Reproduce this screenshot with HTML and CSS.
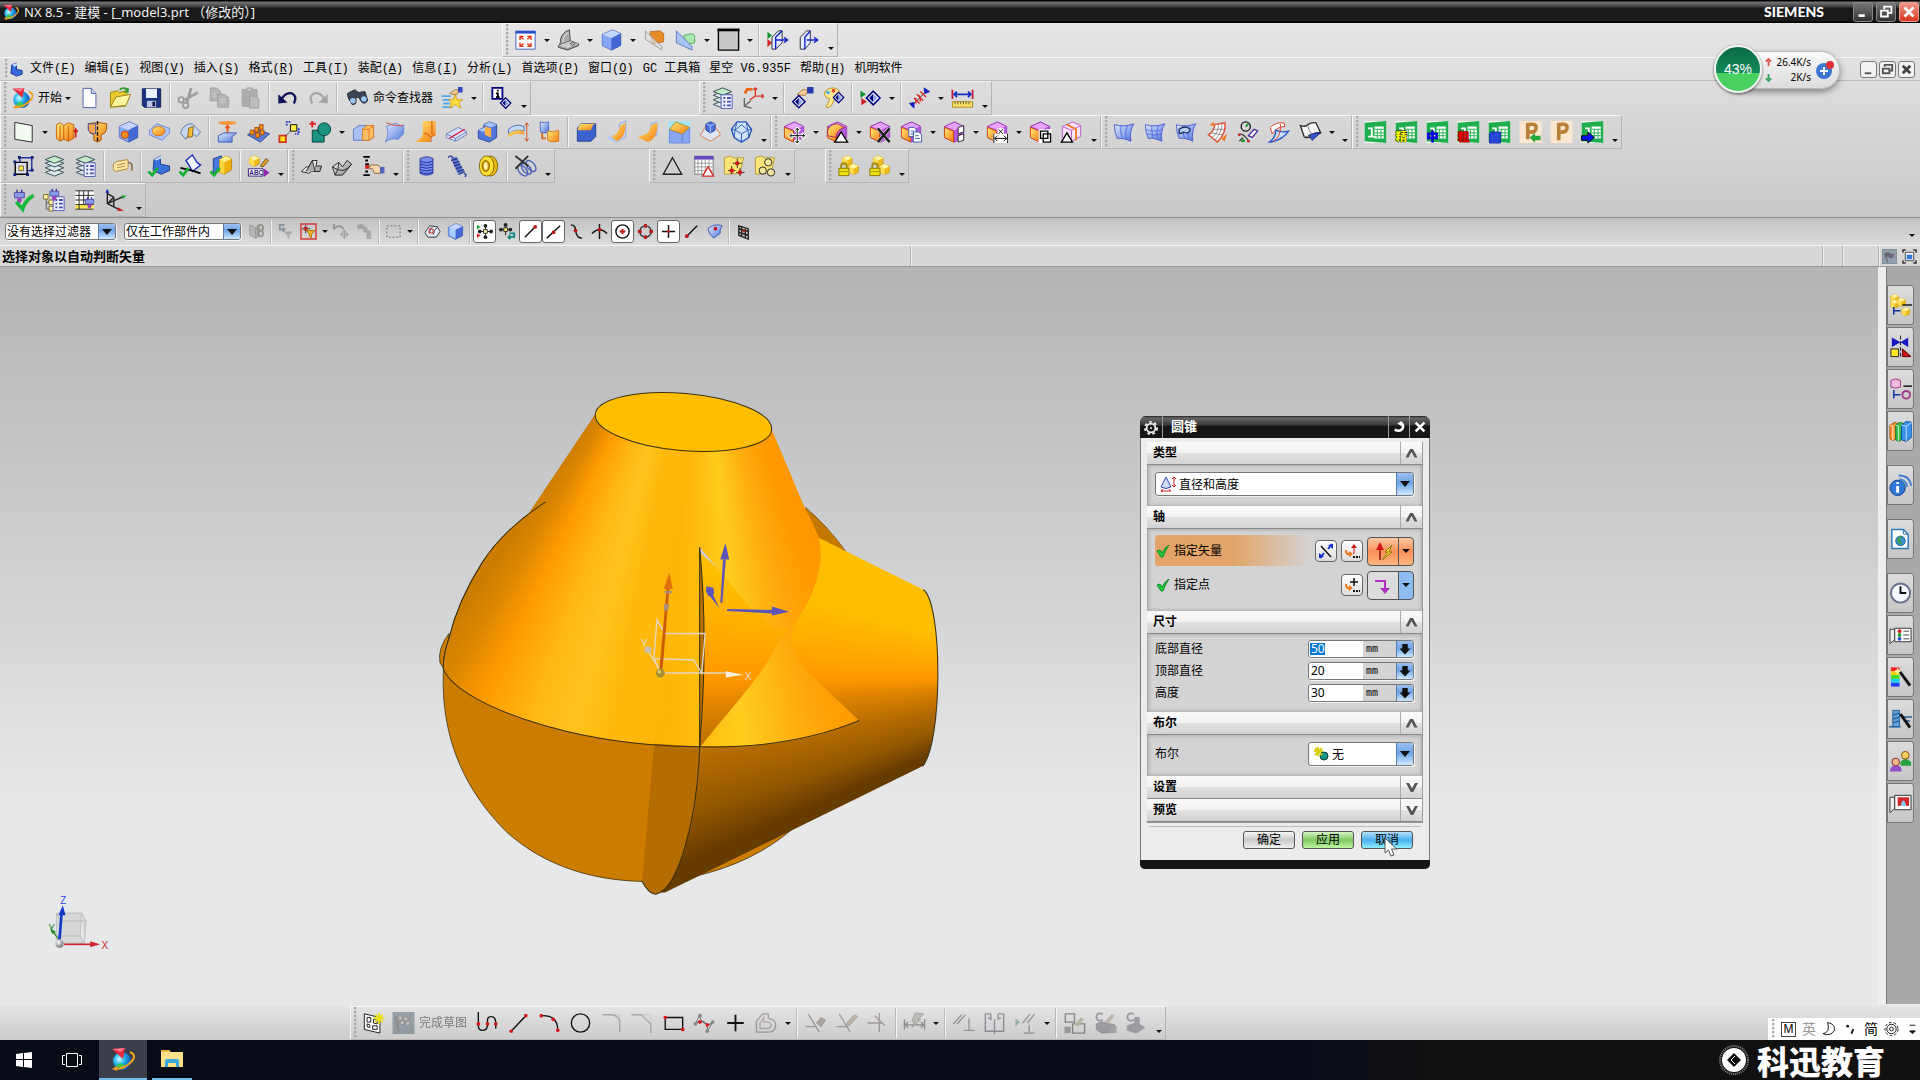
FILE: index.html
```html
<!DOCTYPE html>
<html lang="zh-CN">
	<head>
		<meta charset="UTF-8">
		<meta name="viewport" content="width=device-width,initial-scale=1" />
		<title>NX 8.5 - 建模</title>
		<link rel="stylesheet" href="styles.css">
	</head>
	<body>
		<!-- shared shapes -->
		<svg class="defs" aria-hidden="true">
			<defs>
				<linearGradient id="gB" x1="0" y1="0" x2="1" y2="1"><stop offset="0" stop-color="#e4eeff"/><stop offset="1" stop-color="#4a72dc"/></linearGradient>
				<linearGradient id="gO" x1="0" y1="0" x2="1" y2="1"><stop offset="0" stop-color="#fff07a"/><stop offset="1" stop-color="#f77a10"/></linearGradient>
				<linearGradient id="gG" x1="0" y1="0" x2="1" y2="1"><stop offset="0" stop-color="#fff"/><stop offset="1" stop-color="#777"/></linearGradient>
				<radialGradient id="gGlobe" cx=".35" cy=".4" r=".7"><stop offset="0" stop-color="#d8ffff"/><stop offset=".4" stop-color="#28b8f0"/><stop offset="1" stop-color="#0a4ab0"/></radialGradient>
				<radialGradient id="gBall" cx=".35" cy=".3" r=".8"><stop offset="0" stop-color="#fff"/><stop offset="1" stop-color="#666"/></radialGradient>
				<symbol id="cubeB" viewBox="0 0 24 24"><path d="M2 6L13 1L22 5V18L12 23L2 18Z" fill="#5078e0" stroke="#2a44a0"/><path d="M2 6L12 10V23L2 18Z" fill="#86a8f4"/><path d="M2 6L13 1L22 5L12 10Z" fill="#c4d6ff"/><path d="M12 10L22 5V18L12 23Z" fill="#4468d4"/></symbol>
				<symbol id="cubeP" viewBox="0 0 24 24"><path d="M1 6L12 1L22 6V18L12 23L1 18Z" fill="#b040d8" stroke="#8a2ab0"/><path d="M1 7L11 11V23L1 18Z" fill="url(#gO)" stroke="#d04a08"/><path d="M2 6L12 1.500L21 6L12 10Z" fill="#e8a4fa"/><path d="M12 11L22 6V18L12 23Z" fill="#b558da"/></symbol>
				<symbol id="cubeY" viewBox="0 0 24 24"><path d="M2 6L12 1L22 6V18L12 23L2 18Z" fill="#f0b818" stroke="#c08808"/><path d="M2 6L12 1L22 6L12 11Z" fill="#fff6a8"/><path d="M2 6L12 11V23L2 18Z" fill="#ffdc50"/></symbol>
				<symbol id="nx" viewBox="0 0 24 24"><circle cx="11" cy="14" r="9" fill="url(#gGlobe)"/><path d="M5 19Q9 13 15 20Q11 25 5 19Z" fill="#3cc84a"/><path d="M19 5Q26 8 21 14Q14 22 4 22" fill="none" stroke="#f0a020" stroke-width="2"/><path d="M1 22L6 19L6 24Z" fill="#f0a020"/><path d="M1 2L14 1L12 12Z" fill="#e8283c"/><path d="M1 2L14 1L10 5Z" fill="#ff7888"/></symbol>
				<symbol id="page" viewBox="0 0 24 24"><path d="M5 1.500H14L19 7V22.500H5Z" fill="#fff" stroke="#4a5ca8"/><path d="M14 1.500V7H19" fill="#ccd8f8" stroke="#4a5ca8"/></symbol>
				<symbol id="layers" viewBox="0 0 24 24"><g fill="#dce8e8" stroke="#2c4650"><path d="M2 19L12 15L22 19L12 23Z"/><path d="M2 14L12 10L22 14L12 18Z"/><path d="M2 9L12 5L22 9L12 13Z"/><path d="M2 5L12 1L22 5L12 9Z" fill="#c4ecc8"/></g></symbol>
				<symbol id="list" viewBox="0 0 24 24"><path d="M10.500 8.500H22.500V23.500H10.500Z" fill="#eef0ff" stroke="#5058b8"/><path d="M13 12h2M17 12h4M13 16h2M17 16h4M13 20h2M17 20h4" stroke="#4048a8" stroke-width="2"/></symbol>
				<symbol id="sheet" viewBox="0 0 24 24"><path d="M1 4Q12 7 22 3Q17 12 19 22Q10 18 4 19Q1 12 1 4Z" fill="url(#gB)" stroke="#4a5ad0"/><path d="M8 5Q7 12 10 19M15 5Q12 12 14 20" stroke="#5a6ae0" fill="none"/></symbol>
				<symbol id="eyeCard" viewBox="0 0 24 24"><path d="M12 4L20 12L12 20L4 12Z" fill="#fff" stroke="#000080" stroke-width="2"/><path d="M12 7V17L7 12Z" fill="#000080"/><path d="M12 7V17L17 12Z" fill="#88a8e8"/></symbol>
				<symbol id="xls" viewBox="0 0 24 24"><path d="M0 0H24V24H0Z" fill="#f4faf4"/><path d="M0 2L24 0V24L0 22Z" fill="#1fae4e"/><path d="M4 8H8V17M4 17H11" fill="none" stroke="#fff" stroke-width="2"/><path d="M11 6H21V19H11Z" fill="#fff"/><path d="M11 9H21M11 13H21M11 16H21M14 9V19M18 9V19" stroke="#1fae4e"/></symbol>
				<symbol id="usb" viewBox="0 0 24 24"><path d="M6 1V6M12 1V6" stroke="#38389c" stroke-width="2"/><path d="M2.500 4.500H15.500V11.500H2.500Z" fill="#8898e8" stroke="#38389c"/><path d="M6 12H12V16L9 19L6 16Z" fill="#a040c0"/></symbol>
				<symbol id="tick" viewBox="0 0 14 14"><path d="M1 7L4 6L6 9Q9 3 13 1Q9 7 7 13H5Z" fill="#22c83c" stroke="#12902a"/></symbol>
				<symbol id="lock" viewBox="0 0 24 24"><use href="#cubeY" x="4" y="0" width="13" height="13"/><use href="#cubeY" x="11" y="9" width="13" height="13"/><path d="M4 15V12Q4 9 7 9Q10 9 10 12V15" fill="none" stroke="#a08c10" stroke-width="2"/><path d="M1.500 14.500H12.500V22.500H1.500Z" fill="#f0e010" stroke="#807008"/><path d="M2 18H12" stroke="#a89c10"/></symbol>
			</defs>
		</svg>

		<header class="titlebar">
			<svg class="logo" viewBox="0 0 24 24"><use href="#nx"/></svg>
			<h1>NX 8.5 - 建模 - [_model3.prt （修改的）]</h1>
			<b class="brand">SIEMENS</b>
			<button title="最小化"><svg viewBox="0 0 20 20"><path d="M5 14H12" stroke="#fff" stroke-width="3"/></svg></button>
			<button title="还原"><svg viewBox="0 0 20 20"><path d="M8 7V4H16V11H13M4.500 8.500H12V15H4.500Z" stroke="#fff" stroke-width="2" fill="none"/></svg></button>
			<button class="red" title="关闭"><svg viewBox="0 0 20 20"><path d="M5 5L15 15M15 5L5 15" stroke="#fff" stroke-width="3"/></svg></button>
		</header>

		<div class="ribbon">
			<div class="row">
				<div class="bar in-502">
					<button title="适合窗口"><svg viewBox="0 0 24 24"><path d="M1.500 2.500H22.500V22H1.500Z" fill="#fff" stroke="#3a5cc0"/><path d="M1 2H23V5H1Z" fill="#2a50c8"/><path d="M6 12V8H10M14 8H18V12M6 15V19H10M18 15V19H14M7 9L10 11M17 9L14 11M7 18L10 16M17 18L14 16" stroke="#e03010" stroke-width="1.500"/></svg></button><button class="caret" title="适合选项"></button>
					<button title="剖切"><svg viewBox="0 0 24 24"><path d="M3 15Q3 4 13 1L14 13L2 18Z" fill="#aaa" stroke="#444"/><path d="M6 14Q6 7 12 4" stroke="#eee"/><path d="M1 18L14 13L23 16V18L11 23L1 20Z" fill="#999" stroke="#444"/><path d="M1 18L14 13L23 16L11 21Z" fill="#ccc"/><path d="M14 16l3-2 2 2-3 2Z" stroke="#444"/></svg></button><button class="caret" title="剖切选项"></button>
					<button title="着色"><svg viewBox="0 0 24 24"><use href="#cubeB"/></svg></button><button class="caret" title="着色选项"></button>
					<button title="编辑截面"><svg viewBox="0 0 24 24"><path d="M7 3L18 2L22 5V14L10 16Z" fill="#e88a28" stroke="#c07020"/><path d="M2 2L20 19V23L2 11Z" fill="#ddd" fill-opacity=".7" stroke="#999"/></svg></button>
					<button title="剪切截面"><svg viewBox="0 0 24 24"><path d="M10 7L19 5L22 7V15L13 17Z" fill="#a8e8b0" stroke="#50a860"/><path d="M2 2L19 19V23L2 15Z" fill="#a8c4f4" stroke="#5a78b8"/></svg></button><button class="caret" title="截面选项"></button>
					<button title="背景"><svg viewBox="0 0 24 24"><path d="M1 1H23V23H1Z" fill="#c9c9c9" stroke="#000" stroke-width="1.500"/><path d="M0 1H24" stroke="#000" stroke-width="3"/></svg></button><button class="caret" title="背景选项"></button>
					<i class="sep"></i>
					<button title="显示和隐藏"><svg viewBox="0 0 24 24"><path d="M1 3L6 7L1 11Z" fill="#10902a"/><path d="M1 11L6 15L1 20Z" fill="#d02020"/><path d="M6 22V9L13 2H17V15L10 22Z" fill="#e4ecff" stroke="#223"/><path d="M10 22V9L17 2M10 12H23M19 9L23 12L19 15" stroke="#1020d0" stroke-width="1.500"/></svg></button>
					<button title="隐藏"><svg viewBox="0 0 24 24"><path d="M3 22V9L10 2H14V15L8 22Z" fill="#e4ecff" stroke="#223"/><path d="M8 22V9L14 2M10 12H22M18 9L22 12L18 15" stroke="#1020d0" stroke-width="1.500"/></svg></button>
					<button class="more" title="更多"></button>
				</div>
			</div>

			<nav class="menu">
				<i class="grip"></i>
				<svg viewBox="0 0 16 16"><path d="M3 3L8 1V8L14 9V13L8 15L2 12Z" fill="#3a6ad8" stroke="#12308c"/><path d="M3 3L8 1L10 3L6 5Z" fill="#c4d8ff"/></svg>
				<a href="#">文件(<u>F</u>)</a><a href="#">编辑(<u>E</u>)</a><a href="#">视图(<u>V</u>)</a><a href="#">插入(<u>S</u>)</a><a href="#">格式(<u>R</u>)</a><a href="#">工具(<u>T</u>)</a><a href="#">装配(<u>A</u>)</a><a href="#">信息(<u>I</u>)</a><a href="#">分析(<u>L</u>)</a><a href="#">首选项(<u>P</u>)</a><a href="#">窗口(<u>O</u>)</a><a href="#">GC 工具箱</a><a href="#">星空 V6.935F</a><a href="#">帮助(<u>H</u>)</a><a href="#">机明软件</a>
				<div class="mdi">
					<button title="最小化"><svg viewBox="0 0 16 16"><path d="M4 12H11" stroke="#555" stroke-width="2"/></svg></button>
					<button title="还原"><svg viewBox="0 0 16 16"><path d="M5 5V3H13V9H11M3 7H10V12H3Z" stroke="#555" stroke-width="2" fill="none"/></svg></button>
					<button title="关闭"><svg viewBox="0 0 16 16"><path d="M4 4L12 12M12 4L4 12" stroke="#444" stroke-width="3"/></svg></button>
				</div>
			</nav>

			<div class="row">
				<div class="bar">
					<button class="wide"><svg viewBox="0 0 24 24"><use href="#nx"/></svg>开始</button><button class="caret" title="开始选项"></button>
					<button title="新建"><svg viewBox="0 0 24 24"><use href="#page"/></svg></button>
					<button title="打开"><svg viewBox="0 0 24 24"><path d="M1 22V6L9 4L11 6L19 4V9L22 10L17 21Z" fill="#e8c830" stroke="#98800c"/><path d="M1 22L7 11L23 8L18 20Z" fill="#fff6a0" stroke="#98800c"/><path d="M11 3Q16 -1 20 4M20 1V5H16" stroke="#2a9a30" stroke-width="2"/></svg></button>
					<button title="保存"><svg viewBox="0 0 24 24"><path d="M2 2H22V22H4L2 20Z" fill="#1c3480" stroke="#0c1c50"/><path d="M6 2H18V12H6Z" fill="#e8f0fc"/><path d="M7 15H17V22H7Z" fill="#b8c4e0"/><path d="M13 16H16V21H13Z" fill="#101840"/></svg></button>
					<i class="sep"></i>
					<button class="off" title="剪切"><svg viewBox="0 0 24 24"><path d="M15 1L10 18M22 6L8 14" stroke="#555" stroke-width="3"/><circle cx="4" cy="14" r="3" stroke="#555" stroke-width="2"/><circle cx="9" cy="20" r="3" stroke="#555" stroke-width="2"/></svg></button>
					<button class="off" title="复制"><svg viewBox="0 0 24 24"><g fill="#888" stroke="#555"><path d="M2 1H9L13 5V15H2Z"/><path d="M10 8H18L22 12V22H10Z"/></g><path d="M4 7H9M4 10H9M12 14H19M12 17H19" stroke="#ccc"/></svg></button>
					<button class="off" title="粘贴"><svg viewBox="0 0 24 24"><path d="M3 3H19V21H3Z" fill="#777" stroke="#555"/><path d="M8 1H14V5H8Z" fill="#aaa" stroke="#555"/><path d="M11 10H18L21 13V23H11Z" fill="#999" stroke="#555"/></svg></button>
					<i class="sep"></i>
					<button title="撤销"><svg viewBox="0 0 24 24"><path d="M5 14Q10 5 17 7Q23 10 19 18" stroke="#101058" stroke-width="2.500"/><path d="M2 8V18L12 17Z" fill="#101058"/></svg></button>
					<button class="off" title="重做"><svg viewBox="0 0 24 24"><path d="M19 14Q14 5 7 7Q1 10 5 18" stroke="#666" stroke-width="2.500"/><path d="M22 8V18L12 17Z" fill="#666"/></svg></button>
					<i class="sep"></i>
					<button class="wide pad"><svg viewBox="0 0 24 24"><path d="M1 7L9 3L13 6L20 5L23 14Q22 19 17 17L13 11L10 12Q12 20 6 19L2 12Z" fill="#3a4658" stroke="#1c2430"/><circle cx="7" cy="15" r="3" fill="#9cc8f4"/><circle cx="19" cy="13" r="3" fill="#9cc8f4"/></svg>命令查找器</button>
					<button title="收藏"><svg viewBox="0 0 24 24"><path d="M0 10H10M1 14H10M2 18H9M1 22H12" stroke="#50a8e8" stroke-width="2"/><path d="M15 8L17 14H23L19 17L21 23L15 19L9 23L11 17L8 14H13Z" fill="#ffe040" stroke="#d8a010"/><path d="M9 7L15 3H19L17 8H12Z" fill="#f8cc98" stroke="#a87840"/><path d="M18 0H23V6H18Z" fill="#3848c0"/></svg></button><button class="caret" title="收藏选项"></button>
					<i class="sep"></i>
					<button title="对象信息"><svg viewBox="0 0 24 24"><path d="M2 1H13V13H2Z" fill="#fff" stroke="#000080" stroke-width="2"/><path d="M8 3V5M6 7H8V11M6 11H10" stroke="#000" stroke-width="2"/><use href="#eyeCard" x="8" y="9" width="17" height="17"/></svg></button>
					<button class="more" title="更多"></button>
				</div>
				<div class="bar in-168">
					<button title="图层设置"><svg viewBox="0 0 24 24"><use href="#layers"/><use href="#list"/></svg></button>
					<button title="坐标系"><svg viewBox="0 0 24 24"><path d="M14 1V10L8 14M14 10H23M12 3L14 1L16 3M21 8L23 10L21 12" stroke="#e03828" stroke-width="1.500"/><path d="M2 12V21L10 23M2 21L9 15" stroke="#666" stroke-width="1.500"/><path d="M1 6L4 2L3 1H11V4L6 4L4 8Z" fill="#f06818"/></svg></button><button class="caret" title="坐标系选项"></button>
					<i class="sep"></i>
					<button title="编辑显示"><svg viewBox="0 0 24 24"><path d="M6 8L12 3H19L15 9H9Z" fill="#f8cc98" stroke="#a87840"/><path d="M17 0H24V7H17Z" fill="#2a38b0"/><use href="#eyeCard" x="-2" y="6" width="20" height="20"/></svg></button>
					<button title="涂色"><svg viewBox="0 0 24 24"><path d="M2 8Q3 1 12 1Q20 2 19 9Q14 11 13 13L10 20Q6 24 4 22L8 13Q3 12 2 8Z" fill="#ffe890" stroke="#b88c20"/><circle cx="6" cy="6" r="2" fill="#3cb0e8"/><circle cx="12" cy="4" r="2" fill="#e84830"/><use href="#eyeCard" x="9" y="3" width="17" height="17"/></svg></button>
					<i class="sep"></i>
					<button title="显示"><svg viewBox="0 0 24 24"><path d="M1 4L7 8L1 12Z" fill="#10902a"/><path d="M2 12L8 16L2 20Z" fill="#d02020"/><use href="#eyeCard" x="4" y="1" width="22" height="22"/></svg></button><button class="caret" title="显示选项"></button>
					<i class="sep"></i>
					<button title="测量距离"><svg viewBox="0 0 24 24"><path d="M4 20L20 4" stroke="#222"/><path d="M6 12L12 18M9 8L16 15M13 5L19 11M8 12V18M12 9L13 16" stroke="#d82828" stroke-width="1.500"/><path d="M1 18L6 17V23ZM17 1L18 7L23 5Z" fill="#1020c0" stroke="#1020c0"/></svg></button><button class="caret" title="测量选项"></button>
					<button title="标尺"><svg viewBox="0 0 24 24"><path d="M1 3V13M23 3V13" stroke="#c02040" stroke-width="2"/><path d="M3 8H21M6 5L3 8L6 11M18 5L21 8L18 11" stroke="#1030c0" stroke-width="2"/><path d="M1 16H23V22H1Z" fill="#ffe468" stroke="#a88418"/><path d="M4 16v3M7 16v3M10 16v3M13 16v3M16 16v3M19 16v3" stroke="#554"/></svg></button>
					<button class="more" title="更多"></button>
				</div>
			</div>

			<div class="row">
				<div class="bar">
					<button title="基准平面"><svg viewBox="0 0 24 24"><path d="M2.500 1.500L21.500 5V23L2.500 20Z" fill="#f2faf2" stroke="#222"/></svg></button><button class="caret" title="基准选项"></button>
					<button title="拉伸"><svg viewBox="0 0 24 24"><path d="M1 4L5 2L9 5L14 2L20 4V19L14 22L9 20L5 22L1 19Z" fill="url(#gO)" stroke="#c86010"/><path d="M5 5V22M9 5V20M14 5V22" stroke="#c05808"/><path d="M22 18V9M20 12L22 9L24 12" stroke="#d02818" stroke-width="2"/></svg></button>
					<button title="回转"><svg viewBox="0 0 24 24"><path d="M2 3Q12 0 22 3V9Q21 14 16 15V21L12 23L8 21V15Q3 14 2 9Z" fill="url(#gO)" stroke="#a84808"/><path d="M2 3H10V14Q3 14 2 9Z" fill="#f8a850" stroke="#3a50a8"/><path d="M12 0V24" stroke="#000" stroke-width="1.500" stroke-dasharray="4 2"/></svg></button>
					<button title="孔"><svg viewBox="0 0 24 24"><use href="#cubeB"/><circle cx="8" cy="15" r="4" fill="#f89020" stroke="#c03808"/></svg></button>
					<button title="凸台"><svg viewBox="0 0 24 24"><path d="M1 10L9 3L23 8V13L15 21L1 15Z" fill="#a8c4f8" stroke="#7088d0"/><ellipse cx="11" cy="11" rx="7" ry="5" fill="url(#gO)" stroke="#d87018"/></svg></button>
					<button title="扫掠"><svg viewBox="0 0 24 24"><path d="M1 13Q5 2 14 3L23 12L19 17Q10 10 7 20Z" fill="#c4d6f0" stroke="#5a789c"/><path d="M10 8L15 6L14 17L9 18Z" fill="#f8c038" stroke="#8c6010"/></svg></button>
					<i class="sep"></i>
					<button title="垫块"><svg viewBox="0 0 24 24"><ellipse cx="12" cy="2" rx="10" ry="2" fill="#f89838"/><path d="M12 5V13M10 8L12 5L14 8" stroke="#e85818" stroke-width="2"/><path d="M2 16L8 13H22L17 17V23H2Z" fill="url(#gB)" stroke="#3a58c0"/></svg></button>
					<button title="阵列"><svg viewBox="0 0 24 24"><path d="M0 15L10 9L24 14L14 23Z" fill="#5a7cdc" stroke="#2a489c"/><g fill="#f89020" stroke="#a04c08"><path d="M3 10h4v5h-4zM8 7h4v5h-4zM13 4h4v5h-4zM9 13h4v5h-4zM14 10h4v5h-4z"/></g></svg></button>
					<button title="复制面"><svg viewBox="0 0 24 24"><path d="M1 16H8V23H1Z" fill="#ffe828" stroke="#d03818" stroke-width="2"/><path d="M13 4H20V11H13Z" fill="#fff04c" stroke="#000"/><path d="M8 16L13 11" stroke="#000" stroke-dasharray="2 1"/><path d="M9 5V1H14M22 8V14H18" stroke="#2838c0" stroke-width="2" stroke-dasharray="2 1"/></svg></button>
					<button title="求和"><svg viewBox="0 0 24 24"><path d="M3 0V7M0 3H7" stroke="#e02020" stroke-width="2"/><path d="M3 10H16V23H3Z" fill="#1c9484" stroke="#043c38"/><circle cx="16" cy="9" r="7" fill="#1c9484" stroke="#043c38"/></svg></button><button class="caret" title="布尔选项"></button>
					<button title="抽壳"><svg viewBox="0 0 24 24"><path d="M1 9L7 5H23V18L18 21H1Z" fill="#a8c0f4" stroke="#6078c8"/><path d="M11 9L15 5H23V18L18 21H11Z" fill="#fbbf68" stroke="#e07818"/><path d="M11 9H18V21M18 9L23 5" stroke="#e07818"/></svg></button>
					<button title="修剪体"><svg viewBox="0 0 24 24"><path d="M2 23Q7 13 3 6L14 2Q20 8 22 4L22 14Q18 18 16 20Q8 18 2 23Z" fill="url(#gB)" stroke="#6a88d8"/><path d="M3 2Q12 6 21 5" stroke="#e04830"/></svg></button>
					<button title="延伸"><svg viewBox="0 0 24 24"><path d="M9 0H23V16L17 18V23H0Q9 20 9 12Z" fill="url(#gO)"/><path d="M10 13Q16 14 18 18L22 14M18 18V23M19 0V14" stroke="#c84808"/></svg></button>
					<button title="分割"><svg viewBox="0 0 24 24"><path d="M1 14L14 7L23 12V15L11 22L1 18Z" fill="#d4e0fa" stroke="#6878b8"/><path d="M1 14L11 19L23 12M11 19V22" stroke="#6878b8"/><path d="M4 19L21 9" stroke="#e02040" stroke-width="1.500"/></svg></button>
					<button title="凸起"><svg viewBox="0 0 24 24"><path d="M2 10L8 7V4L14 1L22 4V18L14 23L2 19Z" fill="#5078dc" stroke="#2c489c"/><path d="M2 10L8 7L13 9L8 12ZM8 4L14 1L22 4L16 7Z" fill="#a8c4ff"/><path d="M9 6L16 8V18L9 15Z" fill="#fbb048"/></svg></button>
					<button title="偏置曲面"><svg viewBox="0 0 24 24"><path d="M1 9Q9 2 18 6V11Q9 8 1 14Z" fill="#c4dcfa" stroke="#4868b0"/><path d="M1 14Q9 8 18 11V15Q9 12 1 18Z" fill="url(#gO)"/><path d="M21 2V22M19 5L21 2L23 5M19 19L21 22L23 19" stroke="#d84818"/></svg></button>
					<button title="缝合"><svg viewBox="0 0 24 24"><path d="M2 1Q7 3 11 1V12Q7 14 2 12Z" fill="url(#gB)" stroke="#4a68c8"/><path d="M10 11Q16 13 22 10V22Q15 24 10 21Z" fill="url(#gO)" stroke="#d87818"/><path d="M4 13V19H8" stroke="#e06818" stroke-width="2"/></svg></button>
					<i class="sep"></i>
					<button title="边倒圆"><svg viewBox="0 0 24 24"><path d="M2 8L6 3H22V17L17 22H2Z" fill="#3c62d0" stroke="#203c90"/><path d="M2 10Q3 5 6 3H22Q18 4 17 10Z" fill="url(#gO)"/></svg></button>
					<button title="面倒圆"><svg viewBox="0 0 24 24"><path d="M14 3L21 0V18L14 20Z" fill="#c8d8f6" stroke="#90a8dc"/><path d="M0 18L9 15L19 20L10 24Z" fill="#b0c8f4"/><path d="M5 17Q13 15 15 5L21 2Q21 19 11 22Z" fill="url(#gO)"/></svg></button>
					<button title="软倒圆"><svg viewBox="0 0 24 24"><path d="M14 2L22 0V17H14Z" fill="#a8c0f0"/><path d="M0 18L7 15Q14 13 15 4L22 2Q22 20 11 23Z" fill="url(#gO)"/></svg></button>
					<button title="倒斜角"><svg viewBox="0 0 24 24"><path d="M0 0H24V24H0Z" fill="#a8e4f8"/><path d="M1 9L15 15V24H1ZM15 15L23 7V24H15Z" fill="#88a8f4" stroke="#6888dc"/><path d="M1 9L8 1L23 7L15 14Z" fill="url(#gO)" stroke="#a89020"/></svg></button>
					<button title="拔模"><svg viewBox="0 0 24 24"><path d="M1 16L12 22L23 15L15 3H8Z" fill="#dfe5f2" stroke="#e07848"/><path d="M7 3L12 1L17 3V10L12 13L7 10Z" fill="#4c74d8" stroke="#203c90"/><path d="M7 3L12 5L17 3M12 5V13" stroke="#a8c4ff"/></svg></button>
					<button title="多面体"><svg viewBox="0 0 24 24"><path d="M7 1H17L23 9L20 18L12 23L4 18L1 9Z" fill="#cfe2f8" stroke="#2c58b8" stroke-width="1.500"/><path d="M7 1L5 10L12 14L19 10L17 1M1 9L5 10L4 18M23 9L19 10L20 18M12 14V23M5 10L12 4L19 10" stroke="#2c58b8"/></svg></button>
					<button class="more" title="更多"></button>
				</div>
				<div class="bar">
					<button title="移动面"><svg viewBox="0 0 24 24"><use href="#cubeP"/><path d="M15 8V24M7 16H23M12 11L15 8L18 11M12 21L15 24L18 21M10 13L7 16L10 19M20 13L23 16L20 19" stroke="#fff" stroke-width="3"/><path d="M15 8V24M7 16H23M13 10L15 8L17 10M13 22L15 24L17 22M9 14L7 16L9 18M21 14L23 16L21 18" stroke="#000"/></svg></button><button class="caret" title="移动选项"></button>
					<button title="偏置面"><svg viewBox="0 0 24 24"><use href="#cubeP"/><path d="M1 11Q4 3 12 3L20 7Q12 8 10 18L1 16Z" fill="url(#gO)" stroke="#a02868"/><path d="M16 12L23 23H9Z" fill="#fff" stroke="#000" stroke-width="1.500"/></svg></button><button class="caret" title="偏置选项"></button>
					<button title="删除面"><svg viewBox="0 0 24 24"><use href="#cubeP"/><path d="M9 8L22 23M22 8L9 23" stroke="#fff" stroke-width="4"/><path d="M9 8L22 23M22 8L9 23" stroke="#222" stroke-width="3"/></svg></button>
					<button title="复制面"><svg viewBox="0 0 24 24"><use href="#cubeP"/><g fill="#fff" stroke="#3858b0"><path d="M9 7H15L17 9V17H9Z"/><path d="M14 12H20L23 15V23H14Z"/></g><path d="M11 11h4M11 14h4M16 16h4M16 19h5" stroke="#3858b0"/></svg></button><button class="caret" title="复制选项"></button>
					<button title="替换面"><svg viewBox="0 0 24 24"><use href="#cubeP"/><path d="M16 7L22 5V12L16 14ZM16 16L22 14V21L16 23Z" fill="#fff" stroke="#222"/></svg></button><button class="caret" title="替换选项"></button>
					<button title="线性尺寸"><svg viewBox="0 0 24 24"><use href="#cubeP"/><path d="M7 14H24V24H7ZM12 8H19V14H12Z" fill="#fff"/><path d="M8 14V24M23 14V24M9 19H22M12 16L9 19L12 22M19 16L22 19L19 22M13 9L18 14M18 9L13 14" stroke="#000"/></svg></button><button class="caret" title="尺寸选项"></button>
					<button title="组"><svg viewBox="0 0 24 24"><use href="#cubeP"/><path d="M10 9H24V24H10Z" fill="#fff"/><path d="M12 11H20V19H12ZM15 14H23V23H15Z" stroke="#000" stroke-width="1.500"/></svg></button>
					<button title="横截面"><svg viewBox="0 0 24 24"><path d="M2 6L13 1L22 5V17L12 22L2 18Z" fill="#f8e4f8" stroke="#c050d0"/><path d="M2 6L12 10L22 5M12 10V22" stroke="#c050d0"/><path d="M7 4L17 9V21" stroke="#f07818" stroke-width="2"/><path d="M7 13L13 23H1Z" fill="#fff" stroke="#000" stroke-width="1.500"/></svg></button>
					<button class="more" title="更多"></button>
				</div>
				<div class="bar">
					<button title="直纹"><svg viewBox="0 0 24 24"><use href="#sheet"/></svg></button>
					<button title="通过曲线网格"><svg viewBox="0 0 24 24"><use href="#sheet"/><path d="M1 9Q10 13 20 9M3 14Q10 17 19 14" stroke="#5a6ae0"/></svg></button>
					<button title="剖切曲面"><svg viewBox="0 0 24 24"><use href="#sheet"/><path d="M4 14V9Q11 4 16 9Q15 15 9 12L4 14" fill="#b8d0f0" stroke="#1c2c60" stroke-width="1.500"/></svg></button>
					<button title="艺术曲面"><svg viewBox="0 0 24 24"><path d="M9 4L20 2Q22 12 12 23L2 15Q8 12 9 4Z" fill="#fff" stroke="#e04828" stroke-width="1.500"/><path d="M13 4Q13 13 6 18M17 3Q17 12 9 21M6 9L19 9M5 13L17 15" stroke="#888"/><path d="M3 5L8 1L9 5ZM16 20L22 14L20 22Z" fill="#f07818"/></svg></button>
					<button title="曲面工具"><svg viewBox="0 0 24 24"><circle cx="9" cy="6" r="5" stroke="#222" stroke-width="1.500"/><path d="M9 6L12 3" stroke="#1a9c30" stroke-width="2"/><path d="M12 16L18 9L22 11L16 18Z" fill="#fff" stroke="#4828a0" stroke-width="1.500"/><path d="M1 15Q6 12 12 22M2 22L6 18" stroke="#444" stroke-width="1.500"/><circle cx="2" cy="15" r="1.500" fill="#d02020"/><circle cx="12" cy="22" r="1.500" fill="#d02020"/><path d="M4 20h4v3h-4z" fill="#1a9c30"/></svg></button>
					<button title="扩大"><svg viewBox="0 0 24 24"><path d="M2 7Q8 1 17 2L18 6Q9 6 4 14Z" fill="#fff" stroke="#e03828"/><path d="M1 23Q8 18 8 10Q14 13 22 11Q16 20 3 23Z" fill="#c8e0f8" stroke="#2858c8" stroke-width="1.500"/><path d="M5 22Q14 18 13 3" stroke="#e03828"/></svg></button>
					<button title="修剪片体"><svg viewBox="0 0 24 24"><path d="M1 5Q6 7 9 4Q13 1 18 2L23 13Q18 12 15 15Q9 20 5 17Z" fill="#f6f6f6" stroke="#333" stroke-width="1.500"/><path d="M9 4Q10 12 15 15M5 17Q9 18 12 14" stroke="#777"/><path d="M10 16Q16 12 23 13Q18 17 14 21Z" fill="#3858d0" stroke="#102070"/></svg></button><button class="caret" title="修剪选项"></button>
					<button class="more" title="更多"></button>
				</div>
				<div class="bar">
					<button title="表格"><svg viewBox="0 0 24 24"><use href="#xls"/></svg></button>
					<button title="精加工"><svg viewBox="0 0 24 24"><use href="#xls"/><text x="0" y="22" class="glyph" fill="#ff0" stroke="#222">精</text></svg></button>
					<button title="中加工"><svg viewBox="0 0 24 24"><use href="#xls"/><text x="0" y="22" class="glyph" fill="#00f" stroke="#006">中</text></svg></button>
					<button title="粗加工"><svg viewBox="0 0 24 24"><use href="#xls"/><text x="0" y="22" class="glyph" fill="#e00" stroke="#600">粗</text></svg></button>
					<button title="打开目录"><svg viewBox="0 0 24 24"><use href="#xls"/><path d="M1 14L3 12H13V24H1Z" fill="#2846d8" stroke="#1428a0"/></svg></button>
					<button title="导入"><svg viewBox="0 0 24 24"><path d="M0 0H24V24H0Z" fill="#fbe6d0"/><path d="M9 20V4Q19 2 18 8Q17 13 10 12" stroke="#b88038" stroke-width="4"/><path d="M11 18L17 13V16H23V21H17V24Z" fill="#28a83c"/></svg></button>
					<button title="程序"><svg viewBox="0 0 24 24"><path d="M0 0H24V24H0Z" fill="#fbe6d0"/><path d="M9 21V4Q19 2 18 8Q17 13 10 12" stroke="#b88038" stroke-width="4"/></svg></button>
					<button title="导出"><svg viewBox="0 0 24 24"><use href="#xls"/><path d="M0 16H7V12L14 18L7 24V21H0Z" fill="#0010f0" stroke="#000"/></svg></button>
					<button class="more" title="更多"></button>
				</div>
			</div>

			<div class="row">
				<div class="bar">
					<button title="变换"><svg viewBox="0 0 24 24"><path d="M8 3H21V17H8Z" stroke="#2030a0" stroke-width="1.500"/><path d="M3 8H16V21H3Z" fill="#dde" stroke="#000" stroke-width="1.500"/><path d="M7 12H12V17H7Z" fill="#ffe840" stroke="#665"/><path d="M6 1h3v3h-3zM20 1h3v3h-3zM20 15h3v3h-3zM1 6h3v3h-3zM1 20h3v3h-3zM15 20h3v3h-3z" fill="#101c80"/></svg></button>
					<button title="图层"><svg viewBox="0 0 24 24"><use href="#layers"/></svg></button>
					<button title="图层类别"><svg viewBox="0 0 24 24"><use href="#layers"/><use href="#list"/></svg></button>
					<i class="sep"></i>
					<button title="属性"><svg viewBox="0 0 24 24"><path d="M2 10L6 7L18 5V15L4 18L2 15Z" fill="#ffe9a8" stroke="#b08030"/><path d="M6 11L15 9M6 14L15 12" stroke="#b08030"/><path d="M18 8Q24 8 22 17" stroke="#806038" stroke-width="1.500"/></svg></button>
					<i class="sep"></i>
					<button title="检查几何体"><svg viewBox="0 0 24 24"><path d="M6 5L13 1V10L23 12V17L14 21L5 17Z" fill="#3a70dc" stroke="#14388c"/><path d="M6 5L13 1L15 3L9 6Z" fill="#c4dcff"/><path d="M0 18L4 22L10 14" stroke="#18b030" stroke-width="3"/></svg></button>
					<button title="检查制图"><svg viewBox="0 0 24 24"><path d="M7 6L14 0L19 8L23 11L14 18L11 12Z" fill="#f4f6ff" stroke="#1828b8" stroke-width="1.500"/><path d="M1 14L14 17L23 20" stroke="#000" stroke-width="2"/><path d="M0 18L4 22L10 14" stroke="#18b030" stroke-width="3"/></svg></button>
					<button title="检查模型"><svg viewBox="0 0 24 24"><path d="M3 4L12 1V17L3 20Z" fill="#4878dc" stroke="#204090"/><path d="M10 5L17 1L23 4V16L15 21L10 19Z" fill="#f0b010" stroke="#b88410"/><path d="M10 5L17 1L23 4L15 8Z" fill="#fff090"/><path d="M10 5L15 8V21L10 19Z" fill="#ffd840"/><path d="M0 18L4 22L10 14" stroke="#18b030" stroke-width="3"/></svg></button>
					<i class="sep"></i>
					<button title="注释"><svg viewBox="0 0 24 24"><use href="#cubeY" x="1" y="0" width="13" height="13"/><path d="M14 12L20 4L23 6L17 13Z" fill="#e0a030" stroke="#705010"/><path d="M1 15H17V23H1Z" fill="#fff" stroke="#301878"/><text x="2" y="22" class="abc">ABC</text><path d="M18 15L24 19L18 24Z" fill="#9828b0"/></svg></button>
					<button class="more" title="更多"></button>
				</div>
				<div class="bar">
					<button title="槽"><svg viewBox="0 0 24 24"><path d="M1 18L6 13H9L13 6H18L16 18H12L9 20Z" fill="#eee" stroke="#222"/><path d="M6 18L13 6L16 18M15 18H21L23 12H17" fill="#aaa" stroke="#222"/></svg></button>
					<button title="键槽"><svg viewBox="0 0 24 24"><path d="M1 13L8 8L12 13L17 6L22 10L12 22H4Z" fill="url(#gG)" stroke="#222"/><path d="M4 22Q8 16 8 8M1 13Q14 22 22 10" stroke="#222"/></svg></button>
					<button title="移至"><svg viewBox="0 0 24 24"><path d="M1 2H8M3 6H6M3 10H7M3 18H6M1 22H8" stroke="#000" stroke-width="2"/><path d="M3 11h4v4h-4z" fill="#d01818"/><path d="M8 11H17L20 14V20H13L11 15H8Z" fill="#fbd8b0" stroke="#906030"/><path d="M19 13H24V20H19Z" fill="#5064c0"/></svg></button>
					<button class="more" title="更多"></button>
				</div>
				<div class="bar">
					<button title="圆柱弹簧"><svg viewBox="0 0 24 24"><path d="M5 4Q12 0 19 4V20Q12 24 5 20Z" fill="#7890ec" stroke="#2030a0"/><path d="M5 7Q12 10 19 7M5 10Q12 13 19 10M5 13Q12 16 19 13M5 16Q12 19 19 16M5 19Q12 22 19 19" stroke="#1828a0"/></svg></button>
					<button title="拉伸弹簧"><svg viewBox="0 0 24 24"><path d="M5 3L11 2L19 18L13 22Z" fill="#6478c8"/><path d="M2 3Q4 -1 7 3M5 6L12 4M7 9L14 7M8 12L15 10M10 15L17 13M12 18L19 16M14 21L20 18M19 20Q23 21 20 24" stroke="#283890" stroke-width="1.500"/></svg></button>
					<button title="碟簧"><svg viewBox="0 0 24 24"><ellipse cx="14" cy="12" rx="8" ry="11" fill="#e8b810" stroke="#806008"/><ellipse cx="10" cy="12" rx="8" ry="11" fill="#ffe030" stroke="#806008"/><ellipse cx="9" cy="12" rx="4" ry="6" fill="#d89c08" stroke="#806008"/><ellipse cx="9" cy="12" rx="2" ry="4" fill="#fff8c0"/></svg></button>
					<i class="sep"></i>
					<button title="删除弹簧"><svg viewBox="0 0 24 24"><g stroke="#4860b8" stroke-width="1.500"><ellipse cx="9" cy="17" rx="4" ry="7" transform="rotate(-40 9 17)"/><ellipse cx="13" cy="15" rx="4" ry="7" transform="rotate(-40 13 15)"/><ellipse cx="18" cy="12" rx="4" ry="7" transform="rotate(-40 18 12)"/></g><path d="M1 1L15 12M15 1L1 15" stroke="#333" stroke-width="2"/></svg></button>
					<button class="more" title="更多"></button>
				</div>
				<div class="bar in-94">
					<button title="三角"><svg viewBox="0 0 24 24"><path d="M12 3L22 21H2Z" stroke="#222" stroke-width="1.500"/></svg></button>
					<button title="表"><svg viewBox="0 0 24 24"><path d="M2.500 1.500H22.500V21H2.500Z" fill="#fff" stroke="#777"/><path d="M2 1H23V5H2Z" fill="#6848c0"/><path d="M2 9H22M2 13H22M2 17H22M6 5V21M10 5V21M14 5V21M18 5V21" stroke="#999"/><path d="M17 13L23 23H11Z" fill="#fff" stroke="#d82828" stroke-width="1.500"/></svg></button>
					<button title="点集"><svg viewBox="0 0 24 24"><path d="M1 21V3L8 1L10 3H22L18 20Z" fill="#fbe478" stroke="#b89838"/><path d="M15 4V14M10 9H20M9 12V21M5 17H13M18 14V23M14 19H23" stroke="#222"/><path d="M13 7h4v4h-4zM7 15h4v4h-4zM16 17h4v4h-4z" fill="#d81818"/></svg></button>
					<button title="圆集"><svg viewBox="0 0 24 24"><path d="M1 21V3L8 1L10 3H22L18 20Z" fill="#fbe478" stroke="#b89838"/><g fill="#f0e4a0" stroke="#222"><circle cx="15" cy="8" r="4"/><circle cx="9" cy="17" r="4"/><circle cx="18" cy="19" r="4"/></g></svg></button>
					<button class="more" title="更多"></button>
				</div>
				<div class="bar in-30">
					<button title="锁定"><svg viewBox="0 0 24 24"><use href="#lock"/></svg></button>
					<button title="解锁"><svg viewBox="0 0 24 24"><use href="#lock"/></svg></button>
					<button class="more" title="更多"></button>
				</div>
			</div>

			<div class="row">
				<div class="bar">
					<button title="检查刀具"><svg viewBox="0 0 24 24"><use href="#usb" width="20" height="20"/><path d="M4 14L11 22Q14 12 23 7" stroke="#18b838" stroke-width="4"/></svg></button>
					<button title="操作导航"><svg viewBox="0 0 24 24"><path d="M3 9V22H8M3 15H8" stroke="#555"/><path d="M0 6h5v5h-5zM6 12h5v5h-5zM6 19h5v5h-5z" fill="#fff4a8" stroke="#776820"/><use href="#list"/><use href="#usb" x="5" y="-1" width="18" height="18"/></svg></button>
					<button title="操作表"><svg viewBox="0 0 24 24"><path d="M1 2H21V22H1Z" fill="#fff"/><path d="M1 17H21V22H1Z" fill="#ffe850"/><path d="M1 2H21M1 7H21M1 12H21M1 17H21M1 22H21M5 2V22M10 2V17M15 2V17" stroke="#222"/><use href="#usb" x="10" y="8" width="17" height="17"/></svg></button>
					<button title="坐标轴"><svg viewBox="0 0 24 24"><path d="M2 1V16L14 22M2 16L20 8M2 5L9 9V19M9 9L2 16" stroke="#222" stroke-width="1.500"/><path d="M0 4L2 0L4 4Z" fill="#1020d0"/><path d="M23 7L17 7L19 11Z" fill="#18a030"/><path d="M14 20L20 24L13 24Z" fill="#d02020"/></svg></button>
					<button class="more" title="更多"></button>
				</div>
			</div>
		</div>

		<div class="selbar">
			<label class="combo w111"><select aria-label="类型过滤器"><option>没有选择过滤器</option></select><i class="drop"></i></label>
			<label class="combo w117"><select aria-label="选择范围"><option>仅在工作部件内</option></select><i class="drop"></i></label>
			<div class="tools">
				<button class="off" title="关联"><svg viewBox="0 0 18 18"><path d="M2 2L8 5V16L2 13ZM8 6L12 4V14L8 16" fill="#999" stroke="#555"/><circle cx="13" cy="5" r="3" stroke="#554" stroke-width="2"/><circle cx="13" cy="11" r="3" stroke="#554" stroke-width="2"/></svg></button>
				<i class="sep"></i>
				<button class="off" title="重置过滤器"><svg viewBox="0 0 18 18"><path d="M8 2H3V7H8M6 5L8 7L6 9" stroke="#257" stroke-width="2"/><path d="M7 9H17L13 13V17L11 15V13Z" fill="#876"/></svg></button>
				<button title="过滤"><svg viewBox="0 0 18 18"><path d="M1 1H17V17H1Z" stroke="#d83838" stroke-width="1.500"/><path d="M6 2V11M2 6H11" stroke="#444"/><path d="M7 8H16L12 12V16L10 14V12Z" fill="#ffb818" stroke="#a87008"/><path d="M4 4h4v4h-4z" fill="#b83030"/></svg></button><button class="caret" title="过滤选项"></button>
				<button class="off" title="取消"><svg viewBox="0 0 18 18"><path d="M1 7V1M1 6Q8 0 11 7" stroke="#555" stroke-width="2"/><circle cx="12" cy="12" r="3" stroke="#555"/><path d="M12 7V17M7 12H17" stroke="#555"/></svg></button>
				<button class="off" title="恢复"><svg viewBox="0 0 18 18"><path d="M1 2L6 1L12 5V8H16V17H11V10H8L7 6L2 7Z" fill="#777"/></svg></button>
				<i class="sep"></i>
				<button title="矩形选择"><svg viewBox="0 0 18 18"><path d="M2 3H16V15H2Z" stroke="#666" stroke-dasharray="2 2"/></svg></button><button class="caret" title="矩形选项"></button>
				<i class="sep"></i>
				<button title="实体"><svg viewBox="0 0 18 18"><path d="M1 10L6 3L14 4L17 9L13 15H4Z" fill="#e4ecf8" stroke="#333"/><path d="M6 11Q6 5 9 5M10 12Q10 7 14 5" stroke="#333"/><path d="M6 6L10 7L9 11L5 10Z" stroke="#d82828"/></svg></button>
				<button title="面"><svg viewBox="0 0 18 18"><use href="#cubeB"/><path d="M3 5L9 7V16L3 13Z" fill="#a8d0ff"/></svg></button>
				<i class="sep"></i>
				<button class="on" title="启用捕捉点"><svg viewBox="0 0 18 18"><path d="M1 2L5 4L1 7Z" fill="#18a030"/><path d="M1 11L5 13L1 16Z" fill="#d02020"/><path d="M10 2V16M3 9H17" stroke="#111"/><path d="M8 7h4v4h-4z" fill="#fff8a0" stroke="#333"/><circle cx="10" cy="3" r="2" fill="#222"/><circle cx="10" cy="15" r="2" fill="#222"/><circle cx="4" cy="9" r="2" fill="#222"/><circle cx="16" cy="9" r="2" fill="#222"/></svg></button>
				<button title="清除捕捉点"><svg viewBox="0 0 18 18"><path d="M7 1V13M1 7H13" stroke="#111"/><path d="M5 5h4v4h-4z" fill="#ffe860" stroke="#333"/><circle cx="7" cy="2" r="2" fill="#222"/><circle cx="2" cy="7" r="2" fill="#222"/><circle cx="12" cy="7" r="2" fill="#222"/><path d="M11 11H16V15H10M12 13L10 15L12 17" stroke="#188888" stroke-width="2"/></svg></button>
				<button class="on" title="端点"><svg viewBox="0 0 18 18"><path d="M3 15L14 4" stroke="#111" stroke-width="1.500"/><circle cx="14" cy="4" r="2" fill="#c01818"/></svg></button>
				<button class="on" title="中点"><svg viewBox="0 0 18 18"><path d="M2 16L16 3" stroke="#111" stroke-width="1.500"/><circle cx="9" cy="10" r="2" fill="#c01818"/></svg></button>
				<button title="控制点"><svg viewBox="0 0 18 18"><path d="M3 2Q8 2 8 8Q9 16 15 16" stroke="#111" stroke-width="1.500"/><circle cx="8" cy="8" r="2" fill="#c01818"/></svg></button>
				<button title="交点"><svg viewBox="0 0 18 18"><path d="M9 1V17M1 11Q9 3 17 11" stroke="#111" stroke-width="1.500"/><circle cx="9" cy="7" r="2" fill="#c01818"/></svg></button>
				<button class="on" title="圆心"><svg viewBox="0 0 18 18"><circle cx="9" cy="9" r="7" stroke="#111" stroke-width="1.500"/><path d="M6 9H12M9 6V12" stroke="#c01818" stroke-width="2"/></svg></button>
				<button title="象限点"><svg viewBox="0 0 18 18"><circle cx="9" cy="9" r="6" stroke="#333" stroke-width="1.500"/><path d="M9 1v4M9 13v4M1 9h4M13 9h4" stroke="#c01818" stroke-width="3"/></svg></button>
				<button class="on" title="现有点"><svg viewBox="0 0 18 18"><path d="M9 2V16M2 9H16" stroke="#111" stroke-width="1.500"/><circle cx="9" cy="9" r="1.500" fill="#c01818"/></svg></button>
				<button title="曲线上的点"><svg viewBox="0 0 18 18"><path d="M4 14L15 3" stroke="#111" stroke-width="1.500"/><circle cx="4" cy="14" r="2" fill="#c01818"/></svg></button>
				<button title="曲面上的点"><svg viewBox="0 0 18 18"><path d="M2 6Q9 0 17 3Q14 8 15 11L8 16Q3 12 2 6Z" fill="url(#gB)" stroke="#3858c0"/><circle cx="10" cy="6" r="2" fill="#c01818"/></svg></button>
				<i class="sep"></i>
				<button title="栅格"><svg viewBox="0 0 18 18"><path d="M4 3L14 6V17L4 13ZM7 4V14M11 5V16M4 6L14 9M4 10L14 13" stroke="#222" stroke-width="1.500"/><path d="M8 7h3v3h-3z" fill="#b82020"/></svg></button>
			</div>
			<button class="more" title="更多"></button>
		</div>

		<div class="status">
			<p>选择对象以自动判断矢量</p>
			<span class="cell"></span>
			<span class="cell thin"></span>
			<span class="cell mid"></span>
			<span class="cell flags">
				<svg viewBox="0 0 16 16"><path d="M0 0H16V16H0Z" fill="#8fa0aa" stroke="#75858e"/><path d="M3 4Q7 2 9 4T14 4L12 10Q9 11 7 9T3 11Z" fill="#667" stroke="#99a"/><path d="M3 4L6 14" stroke="#556"/></svg>
				<svg viewBox="0 0 16 16"><path d="M1 4V1H4M12 1H15V4M1 12V15H4M12 15H15V12" stroke="#333" stroke-width="1.500" fill="none"/><path d="M3.500 3.500H12.500V12.500H3.500Z" fill="#fff" stroke="#444"/><path d="M5 6H11V11H5Z" fill="#3a78d8"/></svg>
			</span>
		</div>

		<div class="work">
			<main class="view">
				<!-- solid model; the cone shading turns around each apex -->
				<svg class="model" viewBox="0 0 1568 1568">
					<defs>
						<clipPath id="cV"><path d="M508 130L315 418Q230 480 180 560Q110 670 84 780Q66 830 68 868C100 960 420 1092 812 1093V515L960 690L1035 750H1080Q1185 600 1158 487Q1130 420 1115 395L1020 170L765 100ZM815 1093C900 985 1000 880 1035 800Q1075 740 1082 750Q1060 820 1140 890L1275 1018Q1100 1100 815 1093Z"/></clipPath>
						<clipPath id="cH"><path d="M812 530L960 660L1158 487L1462 638C1518 680 1518 1080 1460 1150L710 1518H685C770 1440 805 1280 812 1093Q838 780 812 530Z"/></clipPath>
					</defs>
					<g fill="#cc7d00" stroke="#2c2410" stroke-width="2">
						<path d="M1085 1330Q970 1430 800 1470L900 1300Z"/>
						<path d="M1120 400Q1180 450 1235 525L1150 500Z"/>
						<path d="M84 765Q50 810 58 850L68 866L84 780Z"/>
						<path d="M365 383Q240 465 180 560Q110 670 84 780Q66 830 68 870C58 1080 140 1230 250 1340C360 1440 500 1482 645 1485L812 1093Z"/>
					</g>
					<path d="M508 130L315 418L400 400Z" fill="#d98500"/>
					<path d="M1120 400Q1180 450 1235 525L1160 488Z" fill="#c47800"/>
					<g clip-path="url(#cH)"><foreignObject width="1568" height="1568"><div class="shade-h"></div></foreignObject></g>
					<g clip-path="url(#cV)"><foreignObject width="1568" height="1568"><div class="shade-v"></div></foreignObject></g>
					<ellipse cx="765" cy="151" rx="257" ry="83" transform="rotate(5 765 151)" fill="#ffbf00" stroke="#3a3010" stroke-width="3"/>
					<path d="M680 1085L645 1485Q665 1522 685 1522C750 1510 806 1300 812 1093Z" fill="#b56c00"/>
					<path d="M812 515Q838 780 812 1093Z" fill="#b87000"/>
					<g fill="none" stroke="#3a3010" stroke-width="3">
						<path d="M365 383Q240 465 180 560Q110 670 84 780Q66 830 68 868C100 960 420 1092 812 1094Q1080 1100 1275 1018"/>
						<path d="M812 515Q838 780 812 1093C806 1300 750 1510 685 1522Q665 1522 645 1485"/>
						<path d="M1462 638C1518 680 1518 1080 1460 1150M812 515V1093"/>
					</g>
					<g stroke="#e2d6c0" stroke-width="4" fill="none">
						<path d="M698 880H890M679 838L688 726L712 765H828L818 880L795 842L679 838L698 875L660 812"/>
					</g>
					<path d="M888 875L940 885L888 893Z" fill="#f4f0dc"/>
					<circle cx="662" cy="812" r="10" fill="#c8c0b0"/>
					<text x="942" y="899" class="axis">X</text><text x="641" y="803" class="axis">Y</text>
					<path d="M695 872L716 636L724 636L704 872Z" fill="#cc5c08"/><path d="M708 636L724 588L734 636Z" fill="#e07008"/>
					<path d="M708 680h16l-4 18h-12zM710 642h22v6h-22z" fill="#a89078"/>
					<circle cx="698" cy="880" r="13" fill="#a89030"/><circle cx="695" cy="876" r="5" fill="#dcd070"/>
					<g fill="#5c54b8"><path d="M872 676L880 550H888L878 676Z"/><path d="M872 550L887 502L898 550Z"/><path d="M892 694L1025 697V707L892 700Z"/><path d="M1022 687L1072 702L1022 713Z"/><path d="M868 690L838 652L848 646Z"/><path d="M832 628L852 632L854 650L838 658L830 642Z"/></g>
				</svg>

				<svg class="triad" viewBox="0 0 200 180">
					<path d="M37 51H112L126 75L120 142H36ZM50 75H126M37 51L50 75L46 142M112 51L108 120L120 142M108 120H40" fill="#ccc" fill-opacity=".6" stroke="#b0b0b0" stroke-width="2"/>
					<path d="M44 130L24 104" stroke="#289030" stroke-width="4"/><path d="M18 96L36 108L24 114Z" fill="#289030"/>
					<path d="M46 130L52 55" stroke="#1438c8" stroke-width="8"/><path d="M43 58L56 28L64 58Z" fill="#1438c8"/>
					<path d="M60 145H142" stroke="#d02830" stroke-width="5"/><path d="M138 136L168 145L138 154Z" fill="#d02830"/>
					<circle cx="46" cy="143" r="12" fill="url(#gBall)"/>
					<text x="48" y="25" fill="#3848f0">Z</text><text x="12" y="108" fill="#289030">Y</text><text x="172" y="159" fill="#d02830">X</text>
				</svg>

				<section class="dialog">
					<header>
						<svg viewBox="0 0 16 16"><circle cx="8" cy="8" r="5" stroke="#eee" stroke-width="2" fill="none"/><circle cx="8" cy="8" r="7" stroke="#eee" stroke-width="2" stroke-dasharray="3 3" fill="none"/><path d="M7 7h2v2h-2z" fill="#eee"/></svg>
						<h2>圆锥</h2>
						<button title="重置"><svg viewBox="0 0 16 16"><path d="M10 3Q14 6 12 10Q9 14 3 11" stroke="#fff" stroke-width="3" fill="none"/><path d="M11 1V7L6 4Z" fill="#fff"/></svg></button>
						<button title="关闭"><svg viewBox="0 0 16 16"><path d="M3 3L13 13M13 3L3 13" stroke="#fff" stroke-width="3"/></svg></button>
					</header>
					<div class="panel">
						<h3>类型<i class="up"></i></h3>
						<div class="group">
							<label class="combo tall">
								<svg viewBox="0 0 16 16"><path d="M6 1L11 11Q6 14 1 11Z" fill="#d0dcf8" stroke="#3448b0"/><path d="M14 1V11M12 3L14 1L16 3M12 9L14 11L16 9M1 15H11M3 13L1 15L3 16M9 13L11 15" stroke="#d02020" fill="none"/></svg>
								<select aria-label="类型"><option>直径和高度</option></select><i class="drop"></i>
							</label>
						</div>
						<h3>轴<i class="up"></i></h3>
						<div class="group axes">
							<div class="line active">
								<svg class="ok"><use href="#tick"/></svg><span>指定矢量</span>
								<button class="sq" title="反向"><svg viewBox="0 0 16 16"><path d="M3 3L13 14" stroke="#111" stroke-width="1.500"/><path d="M10 6L14 1M6 10L2 15" stroke="#1030d0" stroke-width="2"/><path d="M15 1V6L10 2ZM1 15V10L6 14Z" fill="#1030d0"/></svg></button>
								<button class="sq" title="矢量对话框"><svg viewBox="0 0 16 16"><path d="M10 11V4" stroke="#c01818"/><path d="M7 5L10 1L13 5Z" fill="#c01818"/><path d="M2 7Q2 12 6 11" stroke="#f07818" stroke-width="2" fill="none"/><path d="M5 8L9 11L5 14Z" fill="#f07818"/><path d="M9 13h2v2h-2zM12 13h2v2h-2zM15 13h1v2h-1z" fill="#111"/></svg></button>
								<button class="pick hot" title="自动判断的矢量"><svg viewBox="0 0 20 20"><path d="M7 19V6" stroke="#901010" stroke-width="1.500"/><path d="M3 9L7 1L11 9Z" fill="#d01818"/><path d="M19 4L12 11H15L9 19L19 11H16Z" fill="#ffe030" stroke="#887010"/></svg><i></i></button>
							</div>
							<div class="line">
								<svg class="ok"><use href="#tick"/></svg><span>指定点</span>
								<button class="sq" title="点对话框"><svg viewBox="0 0 16 16"><path d="M10 1V9M6 5H14" stroke="#111" stroke-width="1.500"/><path d="M2 7Q2 12 6 11" stroke="#f07818" stroke-width="2" fill="none"/><path d="M5 8L9 11L5 14Z" fill="#f07818"/><path d="M9 13h2v2h-2zM12 13h2v2h-2zM15 13h1v2h-1z" fill="#111"/></svg></button>
								<button class="pick" title="自动判断的点"><svg viewBox="0 0 20 20"><path d="M2 6H12V16" stroke="#b030c0" stroke-width="2" fill="none"/><path d="M7 13L12 19L17 13Z" fill="#b030c0"/></svg><i></i></button>
							</div>
						</div>
						<h3>尺寸<i class="up"></i></h3>
						<div class="group sizes">
							<div class="size"><label for="d1">底部直径</label><div class="field"><input id="d1" class="picked" value="50"><span>mm</span><i class="drop down"></i></div></div>
							<div class="size"><label for="d2">顶部直径</label><div class="field"><input id="d2" value="20"><span>mm</span><i class="drop down"></i></div></div>
							<div class="size"><label for="d3">高度</label><div class="field"><input id="d3" value="30"><span>mm</span><i class="drop down"></i></div></div>
						</div>
						<h3>布尔<i class="up"></i></h3>
						<div class="group">
							<div class="size"><label for="bool">布尔</label>
								<div class="combo tall half">
									<svg viewBox="0 0 16 16"><circle cx="11" cy="10" r="4" fill="#1c9484" stroke="#043c38"/><path d="M5 1V10M1 5H10M2 2L9 9M9 2L2 9" stroke="#d8d010" stroke-width="2"/></svg>
									<select id="bool"><option>无</option></select><i class="drop"></i>
								</div>
							</div>
						</div>
						<h3>设置<i class="up dn"></i></h3>
						<h3>预览<i class="up dn"></i></h3>
					</div>
					<div class="actions"><button>确定</button><button class="green">应用</button><button class="blue">取消</button></div>
					<footer></footer>
					<svg class="cursor" viewBox="0 0 14 20"><path d="M1 1V16L4.500 13L7 19L10 18L7.500 12H12.500Z" fill="#fff" stroke="#555"/></svg>
				</section>
			</main>

			<aside class="tabs">
				<button title="装配导航器"><svg viewBox="0 0 24 24"><use href="#cubeY" x="1" y="0" width="10" height="10"/><use href="#cubeY" x="1" y="6" width="10" height="10"/><use href="#cubeY" x="8" y="4" width="10" height="10"/><use href="#cubeY" x="12" y="14" width="11" height="10"/><path d="M14 12H24" stroke="#111" stroke-width="1.500"/><path d="M5 14V22M5 18H12" stroke="#1030a0" stroke-width="1.500"/></svg></button>
				<button title="约束导航器"><svg viewBox="0 0 24 24"><path d="M3 2L12 7L3 12ZM20 2L12 7L20 12Z" fill="#1418c0"/><path d="M12 0V24" stroke="#222" stroke-dasharray="4 2"/><path d="M2 14H10V22H2Z" fill="#ffe820" stroke="#222"/><path d="M14 14V22H23Z" fill="#d01818" stroke="#500"/></svg></button>
				<button title="部件导航器"><svg viewBox="0 0 24 24"><path d="M2 3Q7 0 12 3V10Q7 12 2 10Z" fill="#f0b8e0" stroke="#a03888"/><path d="M15 9H24" stroke="#111" stroke-width="1.500"/><path d="M5 13V22M5 18H12" stroke="#1030a0" stroke-width="1.500"/><circle cx="18" cy="18" r="4" stroke="#a03888" stroke-width="2"/></svg></button>
				<button title="重用库"><svg viewBox="0 0 24 24"><path d="M1 6L6 3L9 4V20L4 22L1 20Z" fill="#f89838" stroke="#a85008"/><path d="M7 6L11 3L15 4V20L10 23L7 21Z" fill="#38c050" stroke="#107828"/><path d="M13 6L18 2L24 3V18L18 23L13 21Z" fill="#3890e8" stroke="#105098"/><path d="M1 6L4 7V22M7 6L10 7V23M13 6L18 7V23M18 7L24 3" stroke="#fff" stroke-opacity=".7"/></svg></button>
				<button class="gap" title="HD3D"><svg viewBox="0 0 24 24"><circle cx="9" cy="15" r="8" fill="#3078d8" stroke="#184890"/><path d="M9 13V20M9 9V11" stroke="#fff" stroke-width="3"/><path d="M10 2Q22 2 23 13M11 6Q18 7 19 14" stroke="#4880d0" stroke-width="2"/></svg></button>
				<button class="gap" title="浏览器"><svg viewBox="0 0 24 24"><path d="M3 2H15L20 7V22H3Z" fill="#fff" stroke="#2878b8" stroke-width="1.500"/><path d="M15 2V7H20" stroke="#2878b8"/><circle cx="12" cy="14" r="5" fill="#3890d0" stroke="#206898"/><path d="M8 12Q11 8 14 10L12 14L14 18L10 17Z" fill="#38a058"/></svg></button>
				<button class="gap" title="历史记录"><svg viewBox="0 0 24 24"><circle cx="12" cy="12" r="10" fill="#f4f8ff" stroke="#667088" stroke-width="2"/><path d="M12 5V12H18" stroke="#111" stroke-width="2"/></svg></button>
				<button title="系统材料"><svg viewBox="0 0 24 24"><path d="M1 6H6V17L1 21Z" fill="#eee" stroke="#333"/><path d="M6 5H23V19H6Z" fill="#fff" stroke="#333"/><path d="M15 8h6M15 12h6M15 16h6" stroke="#444"/><circle cx="11" cy="8" r="2" fill="#d02020"/><circle cx="11" cy="12" r="2" fill="#20a030"/><circle cx="11" cy="16" r="2" fill="#2050d0"/></svg></button>
				<button title="可视化"><svg viewBox="0 0 24 24"><path d="M2 2H11V6H2Z" fill="#f02020"/><path d="M2 6H11V10H2Z" fill="#f8d010"/><path d="M2 10H11V14H2Z" fill="#40e020"/><path d="M2 14H11V18H2Z" fill="#20d0f0"/><path d="M2 18H11V22H2Z" fill="#2040f0"/><path d="M11 6L22 21" stroke="#111" stroke-width="3"/><path d="M9 3v6M6 6h6" stroke="#fff8a0" stroke-width="2"/></svg></button>
				<button title="加工向导"><svg viewBox="0 0 24 24"><path d="M4 3H11V20H4Z" fill="#68a0d8" stroke="#2060a0"/><path d="M4 8L11 6M4 12L11 10M4 16L11 14M0 20H12M14 10H24M16 14H22" stroke="#2060a0" stroke-width="1.500"/><path d="M12 7L22 21" stroke="#111" stroke-width="3"/></svg></button>
				<button title="角色"><svg viewBox="0 0 24 24"><path d="M12 13Q17 7 23 13V17H12Z" fill="#28a040"/><circle cx="17" cy="6" r="4" fill="#fbd060" stroke="#804808"/><path d="M1 23Q1 16 8 17Q14 17 13 23Z" fill="#9850c8"/><circle cx="7" cy="13" r="4" fill="#f0b890" stroke="#802828"/></svg></button>
				<button title="场景"><svg viewBox="0 0 24 24"><path d="M1 6H6V18L1 22Z" fill="#eee" stroke="#333"/><path d="M6 4H23V19H6Z" fill="#fff" stroke="#333"/><path d="M9 6H21V15H9Z" fill="#d02828"/><path d="M12 15Q15 4 18 15Z" fill="#88c8f0"/></svg></button>
			</aside>
		</div>

		<div class="sketch">
			<div class="bar">
				<button title="草图"><svg viewBox="0 0 24 24"><path d="M2 2L19 6V23L2 19ZM5 6H9V11H5ZM12 8L16 9V13L12 12ZM5 13L8 14V17L5 16ZM11 15H16V19H11Z" fill="#fff" stroke="#111"/><path d="M18 1V13M12 7H24M14 3L22 11M22 3L14 11" stroke="#e8e010" stroke-width="2"/></svg></button>
				<button class="wide flag off"><svg viewBox="0 0 24 24"><path d="M0 0H24V24H0Z" fill="#2c5c78"/><path d="M4 5Q9 2 12 5T20 4L19 14Q14 17 11 14T6 16Z" fill="#444"/><path d="M7 5h3v3h-3zM13 6h3v3h-3zM9 10h3v3h-3zM15 11h3v3h-3z" fill="#aaa"/><path d="M3 4L7 21" stroke="#333" stroke-width="2"/></svg>完成草图</button>
				<button title="轮廓"><svg viewBox="0 0 24 24"><path d="M2 0V15Q2 20 7 20Q12 20 12 14V9Q12 5 16 5Q21 5 21 12V18" stroke="#111" stroke-width="1.500"/><circle cx="2" cy="13" r="2" fill="#d81818"/><circle cx="12" cy="13" r="2" fill="#d81818"/><circle cx="21" cy="13" r="2" fill="#d81818"/></svg></button>
				<button title="直线"><svg viewBox="0 0 24 24"><path d="M4 21L20 4" stroke="#111" stroke-width="1.500"/><circle cx="4" cy="21" r="2" fill="#d81818"/><circle cx="20" cy="4" r="2" fill="#d81818"/></svg></button>
				<button title="圆弧"><svg viewBox="0 0 24 24"><path d="M3 4Q21 3 21 20" stroke="#111" stroke-width="1.500"/><circle cx="3" cy="4" r="2" fill="#d81818"/><circle cx="16" cy="8" r="2" fill="#d81818"/><circle cx="21" cy="20" r="2" fill="#d81818"/></svg></button>
				<button title="圆"><svg viewBox="0 0 24 24"><circle cx="12" cy="12" r="10" stroke="#111" stroke-width="1.500"/></svg></button>
				<button class="off" title="圆角"><svg viewBox="0 0 24 24"><path d="M2 3H12Q21 4 21 13V22" stroke="#666" stroke-width="1.500"/><path d="M12 3H21V13" stroke="#888" stroke-dasharray="1 1"/></svg></button>
				<button class="off" title="倒斜角"><svg viewBox="0 0 24 24"><path d="M0 3H11L21 13V23" stroke="#866" stroke-width="1.500"/><path d="M11 3H21V13" stroke="#888" stroke-dasharray="1 1"/></svg></button>
				<button title="矩形"><svg viewBox="0 0 24 24"><path d="M3 6H22V19H3Z" stroke="#111" stroke-width="1.500"/><circle cx="3" cy="6" r="2" fill="#d81818"/><circle cx="22" cy="19" r="2" fill="#d81818"/></svg></button>
				<button title="样条"><svg viewBox="0 0 24 24"><path d="M2 13L7 3Q7 12 15 13L15 21L21 11" stroke="#666"/><path d="M3 13Q8 6 15 14Q18 14 21 11" stroke="#444"/><g fill="#888"><circle cx="7" cy="4" r="2"/><circle cx="2" cy="13" r="2"/><circle cx="15" cy="21" r="2"/><circle cx="21" cy="11" r="2"/></g><circle cx="7" cy="11" r="2" fill="#d81818"/><circle cx="15" cy="14" r="2" fill="#d81818"/></svg></button>
				<button title="点"><svg viewBox="0 0 24 24"><path d="M12 3V21M3 12H21" stroke="#111" stroke-width="2"/></svg></button>
				<button class="off" title="偏置曲线"><svg viewBox="0 0 24 24"><path d="M1 22V10L8 2H14V7Q22 8 22 14Q22 22 14 22Z" stroke="#555" stroke-width="1.500"/><path d="M5 18V12L9 6V11Q17 10 17 14Q17 18 13 18Z" stroke="#966" stroke-width="1.500"/></svg></button><button class="caret" title="曲线选项"></button>
				<i class="sep"></i>
				<button class="off" title="快速修剪"><svg viewBox="0 0 24 24"><path d="M4 2L16 22M1 16H12" stroke="#555" stroke-width="1.500"/><path d="M13 12L18 6L23 9L18 16Z" fill="#865" stroke="#644"/></svg></button>
				<button class="off" title="快速延伸"><svg viewBox="0 0 24 24"><path d="M4 2L16 22M1 16H12" stroke="#555" stroke-width="1.500"/><path d="M11 16L14 10L21 3L24 5L16 14Z" fill="#a84" stroke="#653"/></svg></button>
				<button class="off" title="制作拐角"><svg viewBox="0 0 24 24"><path d="M14 1V22M1 12H18" stroke="#555" stroke-width="1.500"/><path d="M9 4L20 15" stroke="#a44" stroke-width="1.500"/></svg></button>
				<i class="sep"></i>
				<button class="off" title="自动判断尺寸"><svg viewBox="0 0 24 24"><path d="M1 8V19M23 8V19M2 14H22M5 11L2 14L5 17M19 11L22 14L19 17" stroke="#333" stroke-width="1.500"/><path d="M13 1L22 2L16 8H19L9 17L12 10H9Z" fill="#996" stroke="#555"/></svg></button><button class="caret" title="尺寸选项"></button>
				<i class="sep"></i>
				<button class="off" title="约束"><svg viewBox="0 0 24 24"><path d="M1 13L10 3M5 13L14 3M18 7V20M12 20H24" stroke="#444" stroke-width="1.500"/></svg></button>
				<button class="off" title="对称"><svg viewBox="0 0 24 24"><path d="M8 2H2V21H22V2H16M12 8V24M8 2V8L5 6M16 2V8L19 6" stroke="#336" stroke-width="1.500"/></svg></button>
				<button class="off" title="显示约束"><svg viewBox="0 0 24 24"><path d="M1 7L6 11L1 16Z" fill="#283"/><path d="M9 12L17 2M14 12L22 2M16 14V23M10 23H22" stroke="#444" stroke-width="1.500"/></svg></button><button class="caret" title="约束选项"></button>
				<i class="sep"></i>
				<button class="off" title="转换"><svg viewBox="0 0 24 24"><path d="M2 2H12V11H2ZM10 13H23V23H10Z" stroke="#222" stroke-width="1.500"/><path d="M1 16H8V23H1Z" fill="#555"/><path d="M12 14L19 6L22 8L16 16Z" fill="#983"/></svg></button>
				<button class="off" title="编辑定义线"><svg viewBox="0 0 24 24"><path d="M9 9Q2 11 2 5Q3 0 9 2" stroke="#447" stroke-width="2"/><path d="M2 13L8 11L22 14V22L8 23L2 19Z" fill="#557" stroke="#335"/><path d="M11 11L19 2L22 4L15 13Z" fill="#a84"/><path d="M17 15H24V23H17Z" fill="#666"/></svg></button>
				<button class="off" title="延迟评估"><svg viewBox="0 0 24 24"><path d="M9 9Q2 11 2 5Q3 0 9 2" stroke="#447" stroke-width="2"/><path d="M2 15L10 12V6H15V13L21 17L12 23L2 20Z" fill="#557" stroke="#557"/></svg></button>
				<button class="more" title="更多"></button>
			</div>
		</div>

		<div class="taskbar">
			<button title="开始"><svg viewBox="0 0 16 16"><path d="M0 2L7 1V7H0ZM8 1L16 0V7H8ZM0 8H7V15L0 14ZM8 8H16V16L8 15Z" fill="#fff"/></svg></button>
			<button title="任务视图"><svg class="tv" viewBox="0 0 20 16"><path d="M4.500 1.500H15.500V14.500H4.500ZM3 3.500H.500V12.500H3M17 3.500H19.500V12.500H17" fill="none" stroke="#fff"/></svg></button>
			<button class="cur" title="NX 8.5"><svg class="big" viewBox="0 0 24 24"><use href="#nx"/></svg></button>
			<button class="run" title="文件资源管理器"><svg class="big" viewBox="0 0 24 24"><path d="M1 3H9L11 5H23V20H1Z" fill="#fbe08a"/><path d="M1 3H9L10 5H1Z" fill="#e8b838"/><path d="M5 20V14Q5 12 7 12H17Q19 12 19 14V20H16V16H8V20Z" fill="#3aa8d8"/></svg></button>
			<div class="mark"><svg viewBox="0 0 30 30"><circle cx="15" cy="15" r="14" fill="none" stroke="#888" stroke-width="2" stroke-dasharray="1 1"/><circle cx="15" cy="15" r="12" fill="#fff"/><path d="M15 8L22 15L15 22L8 15Z" fill="#111"/><path d="M16 11L12 15L16 19" stroke="#fff" fill="none"/></svg>科迅教育</div>
		</div>

		<div class="ime">
			<i class="grip"></i><b>M</b><span class="dim">英</span>
			<svg viewBox="0 0 16 16"><path d="M6 1Q15 3 13 10Q9 16 1 13Q9 12 6 1Z" fill="none" stroke="#111"/></svg>
			<svg viewBox="0 0 16 16"><circle cx="5" cy="5" r="1.500" fill="#111"/><path d="M11 8L9 13" stroke="#111" stroke-width="2"/></svg>
			<span>简</span>
			<svg viewBox="0 0 16 16"><circle cx="8" cy="8" r="5" fill="none" stroke="#111"/><circle cx="8" cy="8" r="7" fill="none" stroke="#111" stroke-dasharray="3 2"/><circle cx="8" cy="8" r="2" fill="none" stroke="#111"/></svg>
			<svg viewBox="0 0 16 16"><path d="M5 4H11M5 10H11L8 13Z" stroke="#111" fill="#111"/></svg>
		</div>

		<div class="speed">
			<div class="rates">
				<span><svg viewBox="0 0 8 10"><path d="M4 9V3M1 4L4 1L7 4" stroke="#e05048" stroke-width="2" fill="none"/></svg>26.4K/s</span>
				<span><svg viewBox="0 0 8 10"><path d="M4 1V7M1 6L4 9L7 6" stroke="#28a058" stroke-width="2" fill="none"/></svg>2K/s</span>
			</div>
			<svg class="plus" viewBox="0 0 20 20"><circle cx="9" cy="11" r="8" fill="#3a78d0"/><path d="M9 7V15M5 11H13" stroke="#fff" stroke-width="2"/><circle cx="15" cy="5" r="4" fill="#e03038"/></svg>
			<b class="ball">43%</b>
		</div>
	</body>
</html>
```

FILE: styles.css
```css
*{
	box-sizing: border-box;
}
body{
	margin: 0;
	height: 100vh;
	display: flex;
	flex-direction: column;
	overflow: hidden;
	background: #e6e8e9;
	color: #000;
	font: 12px/16px "Noto Sans", "Noto Sans CJK SC", sans-serif;
}
button{
	border: 0;
	padding: 0;
	margin: 0;
	background: none;
	font: inherit;
	color: inherit;
}
h1, h2, h3, p{
	margin: 0;
}
i{
	font-style: normal;
}
svg{
	display: block;
	flex: none;
}
.defs{
	position: absolute;
	width: 0;
	height: 0;
}

/* title bar */
.titlebar{
	display: flex;
	align-items: center;
	height: 23px;
	padding: 0 1px 0 3px;
	background: linear-gradient(#000 0, #000 1px, #77777a 2px, #3c3c3e 7px, #1a1a1a 8px, #1a1a1a 21px, #000 22px);
	color: #f2f2f2;
}
.titlebar .logo{
	width: 16px;
	height: 16px;
	margin-right: 5px;
}
.titlebar h1{
	flex: 1;
	font-size: 13px;
	font-weight: normal;
}
.brand{
	margin-right: 26px;
	font: 900 14px/16px Lato, sans-serif;
	color: #fff;
}
.titlebar button{
	width: 20px;
	height: 20px;
	margin-left: 3px;
	border: 1px solid #888;
	border-radius: 3px;
	background: linear-gradient(#777, #333);
}
.titlebar button svg{
	width: 18px;
	height: 18px;
}
.titlebar .red{
	background: linear-gradient(#f0988a, #d83820);
	border-color: #f0a090;
}

/* toolbars */
.ribbon{
	background: linear-gradient(#e6e6e6, #c9c9c9);
	border-bottom: 1px solid #8c8c8c;
}
.row{
	display: flex;
	height: 34px;
}
.bar{
	display: flex;
	align-items: center;
	height: 34px;
	padding-left: 7px;
	border: 1px solid #f6f6f6;
	border-right-color: #b4b4b4;
	border-bottom-color: #b4b4b4;
	background: radial-gradient(circle at 1px 1px, #aaa 1px, transparent 2px) 3px 4px / 3px 4px repeat-y;
}
.bar.in-502{
	margin-left: 502px;
}
.bar.in-168{
	margin-left: 168px;
}
.bar.in-94{
	margin-left: 94px;
}
.bar.in-30{
	margin-left: 30px;
}
.bar button{
	display: flex;
	justify-content: center;
	align-items: center;
	flex: none;
	width: 31px;
	height: 30px;
}
.bar svg{
	width: 23px;
	height: 22px;
	fill: none;
	overflow: visible;
}
.bar .wide{
	width: auto;
	padding-left: 3px;
	gap: 4px;
}
.bar .pad{
	padding: 0 4px 0 6px;
}
.bar .flag{
	padding-right: 5px;
}
.off{
	opacity: .45;
	filter: grayscale(.6);
}
.bar .caret{
	width: 12px;
}
.caret::before, .more::before{
	content: "";
	border: 3px solid transparent;
	border-top-color: #111;
	border-bottom: 0;
}
.bar .more{
	width: 13px;
	align-items: flex-end;
	padding-bottom: 5px;
}
.sep{
	width: 2px;
	height: 30px;
	margin: 0 2px;
	border-left: 1px solid #b8b8b8;
	border-right: 1px solid #f6f6f6;
}
.grip{
	width: 3px;
	height: 20px;
	background: radial-gradient(circle at 1px 1px, #aaa 1px, transparent 2px) 0 0 / 3px 4px;
}
.glyph{
	font: bold 13px "Noto Sans CJK SC", sans-serif;
	stroke-width: 1;
	paint-order: stroke;
}
.abc{
	font: bold 7px "Liberation Sans", sans-serif;
	fill: #301878;
}

/* menu */
.menu{
	display: flex;
	align-items: center;
	height: 24px;
	padding: 0 5px 0 5px;
	gap: 9px;
	border-top: 1px solid #f6f6f6;
	border-bottom: 1px solid #bbb;
	font-family: "Liberation Mono", "Noto Sans CJK SC", monospace;
}
.menu > svg{
	width: 15px;
	height: 15px;
	margin: 0 -3px 0 -8px;
}
.menu a{
	color: #000;
	text-decoration: none;
	white-space: nowrap;
}
.mdi{
	display: flex;
	gap: 2px;
	margin-left: auto;
}
.mdi button{
	width: 17px;
	height: 17px;
	border: 1px solid #777;
	border-radius: 3px;
	background: #f2f2f2;
}
.mdi svg{
	width: 15px;
	height: 15px;
}

/* selection bar */
.selbar{
	display: flex;
	align-items: center;
	gap: 8px;
	height: 27px;
	padding: 0 5px;
	background: linear-gradient(#c2c2c2, #dcdcdc);
}
.combo, .field{
	display: flex;
	align-items: stretch;
	height: 17px;
	border: 1px solid #777;
	border-radius: 3px;
	background: #fff;
	overflow: hidden;
	box-shadow: 1px 1px #f4f4f4;
}
.w111{
	width: 111px;
}
.w117{
	width: 117px;
}
select{
	flex: 1;
	min-width: 0;
	appearance: none;
	border: 0;
	padding: 0 0 0 1px;
	background: none;
	font: inherit;
	line-height: 15px;
	color: #000;
}
.drop{
	display: flex;
	justify-content: center;
	align-items: center;
	width: 17px;
	border-left: 1px solid #5a7aa8;
	background: linear-gradient(#9cc0f0, #6ea4e6 45%, #cfeaff);
}
.drop::before{
	content: "";
	border: 5px solid transparent;
	border-top: 6px solid #111;
	border-bottom: 0;
}
.tools{
	display: flex;
	align-items: center;
	flex: 1;
	margin-left: -4px;
}
.tools button{
	display: flex;
	justify-content: center;
	align-items: center;
	width: 23px;
	height: 23px;
}
.tools .caret{
	width: 10px;
}
.tools svg{
	width: 17px;
	height: 17px;
	fill: none;
}
.tools .on{
	border: 1px solid #666;
	border-radius: 3px;
	background: #fff;
}
.tools .sep{
	height: 24px;
}
.selbar .more{
	display: flex;
	align-items: flex-end;
	height: 10px;
}

/* cue line */
.status{
	display: flex;
	align-items: center;
	height: 22px;
	padding-left: 2px;
	border-top: 1px solid #f4f4f4;
	border-bottom: 1px solid #999;
	background: #d8d8d8;
}
.status p{
	width: 908px;
	font-size: 13px;
	font-weight: bold;
}
.cell{
	flex: 1;
	align-self: stretch;
	border-left: 1px solid #b0b0b0;
	box-shadow: inset 1px 0 #f2f2f2;
}
.cell.thin{
	flex: none;
	width: 20px;
}
.cell.mid{
	flex: none;
	width: 36px;
}
.cell.flags{
	display: flex;
	flex: none;
	align-items: center;
	gap: 5px;
	width: 42px;
	padding-left: 3px;
}
.flags svg{
	width: 15px;
	height: 15px;
}

/* graphics window */
.work{
	display: flex;
	flex: 1;
	min-height: 0;
}
.view{
	position: relative;
	flex: 1;
	background: linear-gradient(#b3b4b6, #bdbec0 14%, #d4d5d6 47%, #e6e8e9 72%);
}
.model{
	position: absolute;
	left: 420px;
	top: 103px;
	width: 540px;
	height: 540px;
}
.shade-v{
	width: 1568px;
	height: 1568px;
	background: conic-gradient(from 0deg at 812px -323px, #ff9700 157deg, #ff9a00 161deg, #ffa60a 166deg, #ffbb16 171deg, #ffcd1f 175deg, #ffbf12 179deg, #ffb60a 184deg, #ffb80c 190deg, #ffc31e 195deg, #ffb814 200deg, #ff9c00 206deg, #d98500 211deg, #cc7d00 214deg);
}
.shade-h{
	width: 1568px;
	height: 1568px;
	background: conic-gradient(from 0deg at 1983px 894px, #663b00 246deg, #945800 252deg, #b56c00 259deg, #d98000 265deg, #ff9900 270deg, #ffae00 278deg, #ffbf00 285deg, #ffbf00 297deg);
}
.axis{
	font: 32px "Liberation Sans", sans-serif;
	fill: #e2d6c0;
}
.triad{
	position: absolute;
	left: 44px;
	bottom: 50px;
	width: 67px;
	height: 60px;
	font: 30px "Liberation Sans", sans-serif;
}

/* resource tabs */
.tabs{
	display: flex;
	flex-direction: column;
	gap: 2px;
	width: 42px;
	margin-bottom: 2px;
	padding-top: 18px;
	padding-left: 1px;
	border-left: 8px solid #eee;
	background: #a9a9a9;
	box-shadow: inset 1px 0 #777;
}
.tabs button{
	display: flex;
	justify-content: center;
	align-items: center;
	flex: none;
	width: 27px;
	height: 40px;
	border: 1px solid #777;
	border-radius: 0 3px 3px 0;
	background: linear-gradient(#dcdcdc, #c6c6c6);
}
.tabs .gap{
	margin-top: 12px;
}
.tabs svg{
	width: 23px;
	height: 24px;
	fill: none;
}

/* dialog */
.dialog{
	position: absolute;
	left: 1140px;
	top: 149px;
	width: 290px;
	border: 1px solid #777;
	border-radius: 6px 6px 5px 5px;
	background: #ececec;
}
.dialog header{
	display: flex;
	align-items: stretch;
	height: 22px;
	margin: -1px -1px 4px;
	border-radius: 6px 6px 0 0;
	background: linear-gradient(#222, #666 2px, #3a3a3a 9px, #161616 10px);
	color: #fff;
}
.dialog header > svg{
	width: 14px;
	height: 14px;
	margin: 5px 4px 0;
}
.dialog h2{
	flex: 1;
	padding-left: 8px;
	border-left: 1px solid #999;
	font-size: 13px;
	line-height: 20px;
}
.dialog header button{
	width: 21px;
	border-left: 1px solid #999;
}
.dialog header button svg{
	width: 14px;
	height: 14px;
	margin: 0 auto;
}
.panel{
	margin: 0 6px;
	border-right: 1px solid #999;
	border-bottom: 1px solid #999;
}
.dialog h3{
	display: flex;
	justify-content: space-between;
	height: 23px;
	padding-left: 6px;
	border-bottom: 1px solid #888;
	background: linear-gradient(#fafafa, #f2f2f2 50%, #e2e2e2 52%, #d2d2d4);
	font-size: 12px;
	line-height: 22px;
}
.up{
	display: flex;
	justify-content: center;
	align-items: center;
	width: 22px;
	border-left: 1px solid #aaa;
}
.up::before{
	content: "";
	width: 12px;
	height: 9px;
	background: #555;
	clip-path: polygon(0 100%, 40% 0, 60% 0, 100% 100%, 75% 100%, 50% 40%, 25% 100%);
}
.up.dn::before{
	transform: rotate(180deg);
}
.group{
	padding: 7px 8px 10px 7px;
	border-left: 1px solid #aaa;
	background: #d3d3d3;
	box-shadow: inset 0 0 4px #999;
}
.tall{
	height: 24px;
}
.tall svg{
	width: 16px;
	height: 16px;
	margin: 3px 2px 0 4px;
}
.half{
	width: 106px;
}
.group.axes{
	padding-top: 5px;
	padding-bottom: 9px;
}
.line{
	display: flex;
	align-items: center;
	height: 34px;
	gap: 4px;
}
.line.active{
	background: linear-gradient(90deg, #e2a468 30%, transparent 60%) 0 1px / 100% 31px no-repeat;
	border-radius: 5px;
}
.line span{
	flex: 1;
}
.ok{
	width: 14px;
	height: 14px;
	margin-left: 1px;
}
.sq{
	width: 22px;
	height: 22px;
	border: 1px solid #666;
	border-radius: 4px;
	background: linear-gradient(#fff, #dcdcdc);
}
.sq svg{
	width: 16px;
	height: 16px;
	margin: 0 auto;
}
.pick{
	display: flex;
	align-items: center;
	width: 47px;
	height: 29px;
	border: 1px solid #555;
	border-radius: 4px;
	background: linear-gradient(90deg, #dcdcdc 30px, #555 30px, #555 31px, #8cbcf0 31px);
}
.pick.hot{
	background: linear-gradient(#555, #555) 30px 0 / 1px 100% no-repeat, linear-gradient(#fdc9a4, #f89058 50%, #ffb880);
}
.pick svg{
	width: 20px;
	height: 20px;
	margin: 0 5px;
}
.pick i{
	margin-left: 4px;
	border: 4px solid transparent;
	border-top-color: #111;
	border-bottom: 0;
}
.size{
	display: flex;
	justify-content: space-between;
	align-items: center;
}
.group.sizes{
	display: grid;
	gap: 4px;
	padding-top: 6px;
}
.field{
	width: 106px;
	height: 18px;
	background: #d3d3d3;
}
.field input{
	width: 54px;
	border: 0;
	padding: 0 2px;
	background: #fff;
	font: 12px/16px "Noto Sans", sans-serif;
}
.field .picked{
	background: linear-gradient(#0078d7, #0078d7) 1px 2px / 15px 12px no-repeat #fff;
	color: #fff;
}
.field span{
	flex: 1;
	padding-left: 3px;
	font: 10px/18px "Liberation Mono", monospace;
}
.down::before{
	width: 11px;
	height: 11px;
	border: 0;
	background: #111;
	clip-path: polygon(25% 0, 75% 0, 75% 45%, 100% 45%, 50% 100%, 0 45%, 25% 45%);
}
.actions{
	display: flex;
	justify-content: flex-end;
	gap: 7px;
	margin: 3px 8px 0;
	padding: 4px 8px 11px;
	border-top: 1px solid #bbb;
}
.actions button{
	width: 52px;
	height: 18px;
	border: 1px solid #555;
	border-radius: 3px;
	background: linear-gradient(#f6f6f6, #c9c9c9 50%, #f0f0f0);
	line-height: 14px;
}
.actions .green{
	background: linear-gradient(#d8f4c8, #7cc860 50%, #c0f8a0);
}
.actions .blue{
	background: linear-gradient(#b8e0fa, #48b0f0 50%, #90f0ff);
}
.dialog footer{
	height: 9px;
	margin: 0 -1px -1px;
	border-radius: 0 0 5px 5px;
	background: #161618;
}
.cursor{
	position: absolute;
	right: 31px;
	bottom: 11px;
	width: 14px;
	height: 20px;
}

/* sketch toolbar */
.sketch{
	display: flex;
	height: 34px;
	padding-left: 350px;
	background: linear-gradient(#e4e4e4, #cbcbcb);
}

/* taskbar */
.taskbar{
	display: flex;
	height: 40px;
	background: linear-gradient(90deg, #080c17 68%, #111 75%);
}
.taskbar button{
	display: flex;
	justify-content: center;
	align-items: center;
	width: 48px;
}
.taskbar button svg{
	width: 16px;
	height: 16px;
}
.taskbar button .tv{
	width: 20px;
}
.taskbar button .big{
	width: 24px;
	height: 24px;
}
.taskbar .cur{
	margin-left: 3px;
	background: #3a3f4a;
	border-bottom: 2px solid #76b9ed;
}
.taskbar .run{
	width: 40px;
	margin-left: 5px;
	border-bottom: 2px solid #76b9ed;
}
.mark{
	display: flex;
	align-items: center;
	gap: 8px;
	margin-left: auto;
	margin-right: 35px;
	color: #fff;
	font: 900 32px/36px "Noto Sans CJK SC", sans-serif;
}
.mark svg{
	width: 30px;
	height: 30px;
}

/* floating input bar */
.ime{
	position: absolute;
	right: 0;
	bottom: 40px;
	display: flex;
	align-items: center;
	gap: 6px;
	width: 152px;
	height: 22px;
	padding-left: 4px;
	background: #fff;
	font-size: 14px;
}
.ime b{
	width: 15px;
	height: 15px;
	border: 1px solid #444;
	font: 12px/13px "Liberation Sans", sans-serif;
	text-align: center;
}
.ime .dim{
	color: #999;
}
.ime svg{
	width: 15px;
	height: 16px;
}

/* floating speed meter */
.speed{
	position: absolute;
	top: 51px;
	right: 80px;
	display: flex;
	align-items: center;
	justify-content: flex-end;
	gap: 4px;
	width: 116px;
	height: 38px;
	padding-right: 4px;
	border: 1px solid #bbb;
	border-radius: 19px;
	background: linear-gradient(#fafafa, #dcdcdc);
	box-shadow: 0 3px 6px rgba(0, 0, 0, .4);
	font: 10px/15px "Noto Sans", sans-serif;
}
.rates span{
	display: flex;
	justify-content: space-between;
	align-items: center;
	width: 46px;
}
.rates svg{
	width: 7px;
	height: 9px;
}
.plus{
	width: 20px;
	height: 20px;
}
.ball{
	position: absolute;
	left: -11px;
	top: -7px;
	width: 48px;
	height: 48px;
	border: 2px solid #f0f4f0;
	border-radius: 50%;
	background: linear-gradient(#0a6a44, #128a58 58%, #48d060 60%);
	box-shadow: 0 1px 3px rgba(0, 0, 0, .6);
	color: #fff;
	font: 14px/44px "Liberation Sans", sans-serif;
	text-align: center;
}
```
